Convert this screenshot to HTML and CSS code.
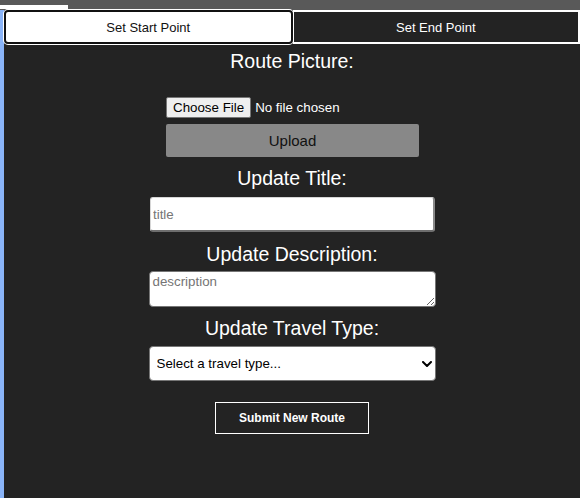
FILE: index.html
```html
<!DOCTYPE html>
<html lang="en">
<head>
<meta charset="utf-8">
<title>Edit Route</title>
<link rel="stylesheet" href="styles.css">
</head>
<body>
<div class="topbar"><div class="chip"></div></div>
<div class="panel">
  <div class="tabs">
    <button class="tab active">Set Start Point</button>
    <button class="tab">Set End Point</button>
  </div>
  <div class="form">
    <label class="heading h-first">Route Picture:</label>
    <div class="upload">
      <input class="file" type="file">
      <button class="upload-btn">Upload</button>
    </div>
    <label class="heading h-title">Update Title:</label>
    <input class="text" type="text" placeholder="title">
    <label class="heading h-desc">Update Description:</label>
    <textarea class="area" placeholder="description"></textarea>
    <label class="heading h-type">Update Travel Type:</label>
    <div class="select-wrap">
      <select class="select">
        <option>Select a travel type...</option>
        <option>Walking</option>
        <option>Cycling</option>
        <option>Driving</option>
      </select>
      <svg class="chev" width="10" height="6" viewBox="0 0 10 6"><path d="M1 1 L5 5 L9 1" fill="none" stroke="#000" stroke-width="2" stroke-linecap="round" stroke-linejoin="round"/></svg>
    </div>
    <button class="submit">Submit New Route</button>
  </div>
</div>
</body>
</html>
```

FILE: styles.css
```css
* { box-sizing: border-box; }
html, body { margin: 0; padding: 0; }
body {
  background: #595959;
  font-family: "Liberation Sans", Arial, sans-serif;
  overflow: hidden;
}
.topbar {
  height: 10px;
  padding-top: 5px;
}
.chip {
  width: 68px;
  height: 4px;
  background: #ffffff;
}
.panel {
  border-left: 4px solid #8ab4f8;
  background: #232323;
  min-height: 488px;
  display: flex;
  flex-direction: column;
}
.tabs {
  display: flex;
  height: 34px;
}
.tab {
  flex: 1;
  height: 34px;
  margin: 0;
  background: #232323;
  color: #ffffff;
  border: 2px solid #ffffff;
  border-left-width: 1px;
  font-family: "Liberation Sans", Arial, sans-serif;
  font-size: 13px;
  padding: 0;
}
.tab.active {
  background: #ffffff;
  color: #111111;
  border: 2px solid #111111;
  border-radius: 4px;
  box-shadow: 0 0 0 1px #ffffff;
  position: relative;
  z-index: 1;
}
.form {
  display: flex;
  flex-direction: column;
  align-items: center;
}
.heading {
  display: block;
  color: #ffffff;
  font-size: 19.5px;
  line-height: 22px;
  text-align: center;
}
.h-first { margin-top: 6px; }
.h-title { margin-top: 10px; }
.h-desc { margin-top: 11px; }
.h-type { margin-top: 10px; }
.upload {
  width: 253px;
  margin-top: 25px;
  margin-left: 1px;
  display: flex;
  flex-direction: column;
  align-items: flex-start;
}
.file {
  color: #ffffff;
  font-family: "Liberation Sans", Arial, sans-serif;
  font-size: 13.33px;
  height: 21px;
  margin: 0;
}
.file::file-selector-button {
  font-family: "Liberation Sans", Arial, sans-serif;
  font-size: 13.33px;
  background: #efefef;
  color: #000000;
  border: 1px solid #767676;
  border-radius: 2px;
  padding: 1px 6px;
  margin-right: 4px;
  height: 21px;
}
.upload-btn {
  margin-top: 6px;
  width: 253px;
  height: 33px;
  background: #888888;
  color: #111111;
  border: none;
  border-radius: 2px;
  font-family: "Liberation Sans", Arial, sans-serif;
  font-size: 15px;
}
.text {
  margin-top: 8px;
  width: 285px;
  height: 35px;
  background: #ffffff;
  border: 1px solid #d6d6d6;
  border-bottom: 2px solid #6e6e6e;
  border-right: 2px solid #8a8a8a;
  border-radius: 3px;
  padding: 0 2px;
  font-family: "Liberation Sans", Arial, sans-serif;
  font-size: 13.33px;
  color: #000;
  margin-left: 1px;
}
.text::placeholder, .area::placeholder { color: #757575; }
.area {
  margin-top: 6px;
  width: 287px;
  height: 36px;
  background: #ffffff;
  border: 1px solid #767676;
  border-radius: 4px;
  padding: 2px 3px;
  font-family: "Liberation Sans", Arial, sans-serif;
  font-size: 13.33px;
  resize: vertical;
}
.select-wrap {
  position: relative;
  margin-top: 7px;
  width: 287px;
  height: 35px;
}
.select {
  -webkit-appearance: none;
  appearance: none;
  width: 287px;
  height: 35px;
  background: #ffffff;
  border: 1px solid #767676;
  border-radius: 4px;
  padding: 0 7px;
  font-family: "Liberation Sans", Arial, sans-serif;
  font-size: 13.33px;
  color: #000;
}
.chev {
  position: absolute;
  right: 4px;
  top: 15px;
  pointer-events: none;
}
.submit {
  margin-top: 21px;
  width: 154px;
  height: 32px;
  background: #232323;
  color: #ffffff;
  border: 1px solid #ffffff;
  border-radius: 0;
  font-family: "Liberation Sans", Arial, sans-serif;
  font-size: 12px;
  font-weight: bold;
}
```
